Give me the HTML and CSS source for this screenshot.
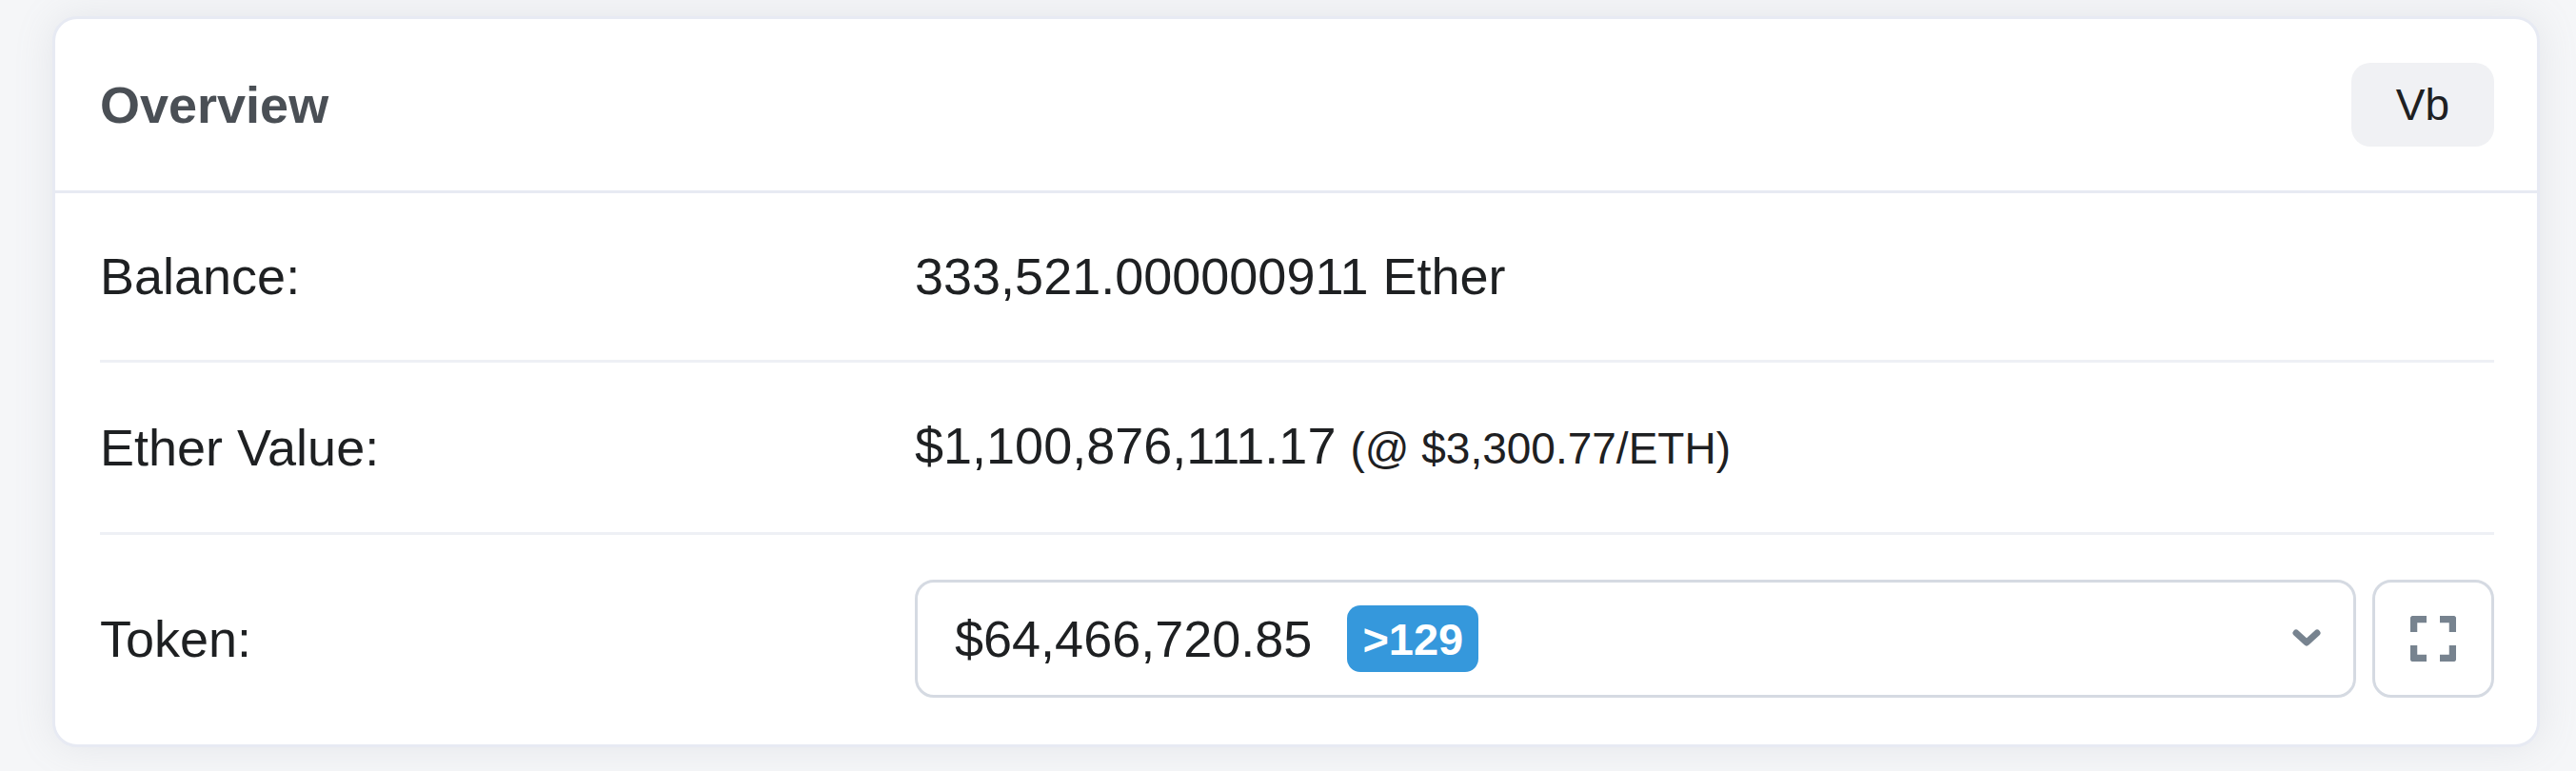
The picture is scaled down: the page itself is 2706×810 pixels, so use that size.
FILE: index.html
```html
<!DOCTYPE html>
<html lang="en">
<head>
  <meta charset="UTF-8">
  <title>Overview</title>
  <link rel="stylesheet" href="styles.css">
</head>
<body>
  <div class="card">
    <div class="card-header">
      <h2 class="card-title">Overview</h2>
      <button class="btn-soft">Vb</button>
    </div>

    <div class="card-body">
      <div class="row">
        <div class="row-label">Balance:</div>
        <div class="row-value">333,521.000000911 Ether</div>
      </div>

      <div class="row">
        <div class="row-label">Ether Value:</div>
        <div class="row-value">$1,100,876,111.17 <span class="small">(@ $3,300.77/ETH)</span></div>
      </div>

      <div class="row row-last">
        <div class="row-label">Token:</div>
        <div class="row-value token-wrap">
          <div class="token-select">
            <span class="token-amount">$64,466,720.85</span>
            <span class="badge">&gt;129</span>
            <!-- chevron -->
            <svg class="chevron" width="30" height="22" viewBox="0 0 30 22">
              <polyline points="4,5 15,15 26,5" fill="none" stroke="#77838f" stroke-width="7" stroke-linecap="round" stroke-linejoin="round"/>
            </svg>
          </div>
          <button class="btn-expand">
            <svg width="48" height="48" viewBox="0 0 48 48">
              <g fill="none" stroke="#77838f" stroke-width="7.5" stroke-linejoin="round">
                <path d="M3.5 17 V3.5 H17"/>
                <path d="M31 3.5 H44.5 V17"/>
                <path d="M3.5 31 V44.5 H17"/>
                <path d="M31 44.5 H44.5 V31"/>
              </g>
            </svg>
          </button>
        </div>
      </div>
    </div>
  </div>
</body>
</html>
```

FILE: styles.css
```css
body {
  margin: 0;
  padding: 17px 38px 28px 55px;
  background-color: #f5f6f8;
  font-family: "Liberation Sans", Arial, Helvetica, sans-serif;
  color: #1e2022;
}
.card {
  background-color: #fff;
  border: 3px solid #e7eaf3;
  border-radius: 26px;
  box-shadow: 0 0 40px rgba(140, 152, 164, 0.16);
}
.card-header {
  display: flex;
  align-items: center;
  justify-content: space-between;
  padding: 46px 45px 46px 47px;
  border-bottom: 3px solid #e7eaf3;
}
.card-title {
  margin: 0;
  font-size: 54px;
  font-weight: bold;
  color: #4a4f55;
  line-height: 88px;
}
.btn-soft {
  height: 88px;
  padding: 0 47px;
  border: none;
  border-radius: 20px;
  background-color: #f0f1f4;
  font-family: inherit;
  font-size: 46px;
  color: #1e2022;
}
.card-body {
  padding: 0 45px 0 47px;
}
.row {
  display: grid;
  grid-template-columns: 856px 1fr;
  align-items: center;
  padding: 47px 0;
  border-bottom: 3px solid #eef0f5;
  font-size: 54px;
  line-height: 81px;
}
.row-last {
  border-bottom: none;
  padding-bottom: 49px;
}
.row-label {
  color: #1e2022;
}
.small {
  font-size: 46px;
}
.token-wrap {
  display: flex;
  gap: 17px;
}
.token-select {
  flex: 1;
  display: flex;
  align-items: center;
  gap: 37px;
  height: 124px;
  box-sizing: border-box;
  padding: 0 34px 0 39px;
  border: 3px solid #d5dae2;
  border-radius: 20px;
}
.token-amount {
  color: #1e2022;
}
.badge {
  display: inline-flex;
  align-items: center;
  height: 70px;
  padding: 0 16px;
  border-radius: 14px;
  background-color: #3598dc;
  color: #fff;
  font-size: 47px;
  font-weight: bold;
  line-height: 1;
}
.chevron {
  margin-left: auto;
}
.btn-expand {
  width: 128px;
  height: 124px;
  display: flex;
  align-items: center;
  justify-content: center;
  padding: 0;
  border: 3px solid #d5dae2;
  border-radius: 20px;
  background-color: #fff;
}
```
